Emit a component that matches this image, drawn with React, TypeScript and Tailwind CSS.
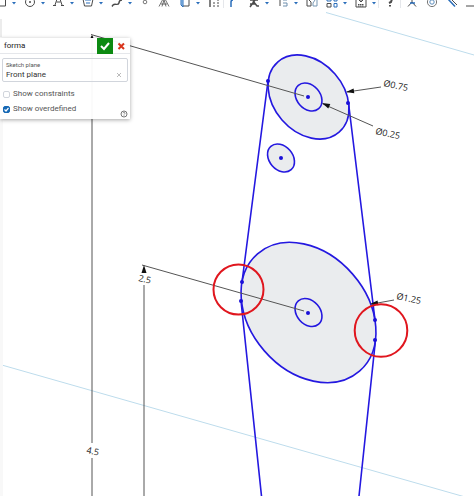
import type { ReactNode } from "react";

type Tool = {
    name: string;
    icon: ReactNode;
    menu?: boolean;
    gap?: string;
    size?: string;
    divider?: boolean;
};

const dark = "#4b4b4b";
const blue = "#2a6ebb";

const tools: Tool[] = [
    { name: "Rectangle", menu: true, size: "w-2.5", gap: "mr-[3px]", icon: <path d="M-3 6H5.500V-2" stroke={dark} /> },
    { name: "Circle", menu: true, gap: "mr-[3px]", icon: <><circle cx="9" cy="2" r="4.500" stroke={dark} /><circle cx="9" cy="2" r="1" fill={dark} /></> },
    { name: "Arc", menu: true, gap: "mr-[3px]", icon: <><path d="M7-1L5 5M10-1L12 5M6.500 2H10.500" stroke={dark} /><path d="M3 5.500H6M11 5.500H14" stroke={dark} /></> },
    { name: "Polygon", menu: true, gap: "mr-[3px]", icon: <><path d="M4-1L5.500 6H12.500L14-1" stroke={dark} /><path d="M6 0H12M7 3H11" stroke={blue} /></> },
    { name: "Spline", menu: true, gap: "mr-[3px]", icon: <path d="M4 6.500L5 5C7 3 10 6 11 3C11 1 12 0 14 0" stroke={dark} strokeWidth="1.400" /> },
    { name: "Point", icon: <circle cx="8" cy="2" r="1.800" stroke="#777" /> },
    { name: "Text", gap: "mr-[3px]", icon: <><path d="M8-1L4 6.500M10-1L14 6.500M9 0L7 6.500M9 0L11 6.500M6 4H12" stroke={dark} strokeWidth=".8" /></> },
    { name: "Use", menu: true, gap: "mr-[3px]", icon: <><path d="M6-1V6H13V-1" stroke={dark} /><path d="M5-1V5L7 7V-1" stroke={blue} fill="#acd0f1" /></> },
    { name: "Construction", divider: true, icon: <><path d="M5-1V7" stroke={dark} strokeWidth="1.400" /><path d="M8 3H11M8 6H10M13-1V7" stroke={dark} strokeDasharray="2 1" /></> },
    { name: "Dimension", gap: "mr-[3px]", icon: <path d="M7 7V2C7 1 8 0 9 0" stroke={blue} strokeWidth="1.500" /> },
    { name: "Trim", menu: true, gap: "mr-[3px]", icon: <path d="M5 0H13M10 0L5 7M8 1L12 6H14M5 4H10" stroke={dark} strokeWidth="1.500" /> },
    { name: "Linear pattern", menu: true, gap: "mr-[3px]", icon: <><path d="M6 0V6" stroke={dark} /><path d="M9 0H13M9 3H13V6H9" stroke="#6e8fae" /></> },
    { name: "Mirror", gap: "mr-0.5", icon: <><path d="M4-1V6H8V2L5-1" stroke={dark} /><path d="M14-1V6H10V3L12 0" stroke="#7797b3" /></> },
    { name: "Pattern", menu: true, gap: "mr-[3px]", icon: <><path d="M4-2H8V1H4ZM11-2H14V1H11Z" stroke={blue} /><path d="M4 3.500H8V7H4Z" stroke={dark} /><path d="M11 3.500H14V7H11Z" stroke={blue} /></> },
    { name: "Insert DXF", menu: true, gap: "mr-[3px]", divider: true, icon: <><path d="M4-1V7H14V-1" stroke={dark} /><path d="M6 4.500H12M6 6H12" stroke={dark} strokeDasharray="1.500 .5" /><path d="M9-1V2L7 0M9 2L11 0" stroke={dark} /></> },
    { name: "Fix", gap: "mr-0.5", divider: true, icon: <path d="M10-1L9 2L7 3M8 5V6.500" stroke={dark} strokeWidth="2" /> },
    { name: "Coincident", gap: "mr-0.5", icon: <><path d="M9-1V2L5 6.500M9 2L13 6.500" stroke={dark} /><path d="M7 3H12" stroke={blue} strokeWidth="1.500" /></> },
    { name: "Concentric", gap: "mr-0.5", icon: <><circle cx="9" cy="2" r="4.600" stroke="#777" /><circle cx="9" cy="2" r="2.200" stroke="#5c8dbd" /></> },
    { name: "Parallel", gap: "mr-0.5", icon: <><path d="M5-1L12 6.500" stroke={blue} strokeWidth="1.500" /><path d="M8-1L14 5" stroke={dark} /></> },
    { name: "Tangent", icon: <path d="M3 6H12" stroke={dark} /> },
];

function Toolbar() {
    return (
        <div role="toolbar" aria-label="Sketch tools" className="flex h-2 overflow-hidden bg-white">
            {tools.map((tool) => (
                <div key={tool.name} className={`flex shrink-0 ${tool.gap ?? ""}`}>
                    <button type="button" aria-label={tool.name} className={`h-2 ${tool.size ?? "w-[18px]"}`}>
                        <svg viewBox={tool.size ? "0 0 10 8" : "0 0 18 8"} fill="none" className="block h-2 w-full">
                            {tool.icon}
                        </svg>
                    </button>
                    {tool.menu && (
                        <button type="button" aria-label={`${tool.name} options`} className="h-2 w-2">
                            <svg viewBox="0 0 8 8" className="block h-2 w-2">
                                <path d="M2 2H6L4 4.500Z" fill={blue} />
                            </svg>
                        </button>
                    )}
                    {tool.divider && <span className="h-2 w-px bg-gray-200" />}
                </div>
            ))}
        </div>
    );
}

function SketchDialog() {
    return (
        <form className="absolute top-[30px] left-0 w-[130px] bg-white/95 font-[Roboto,sans-serif] text-[8px] leading-3 text-[#555] shadow-[0_1px_4px_rgba(0,0,0,0.35)]">
            <div className="flex h-4 items-center border-b border-gray-200 pr-px pl-1">
                <h2 className="flex-1 text-[#222]">forma</h2>
                <button type="button" aria-label="Accept" className="flex size-4 items-center justify-center bg-[#0c8a12]">
                    <svg viewBox="0 0 16 16" className="size-4" fill="none" stroke="#fff" strokeWidth="2">
                        <path d="M4 8L7 11L12 5" />
                    </svg>
                </button>
                <button type="button" aria-label="Cancel" className="flex size-4 items-center justify-center">
                    <svg viewBox="0 0 16 16" className="size-4" fill="none" stroke="#d9341c" strokeWidth="2">
                        <path d="M5.500 5.500L11 11M11 5.500L5.500 11" />
                    </svg>
                </button>
            </div>
            <div className="mx-0.5 mt-1 flex h-6 items-end rounded-xs border border-gray-300 pr-1 pl-[3px]">
                <label className="min-w-0 flex-1">
                    <span className="block text-[6px] leading-2">Sketch plane</span>
                    <input type="text" defaultValue="Front plane" className="block h-3 w-full text-[8px] leading-3 text-[#333] outline-none" />
                </label>
                <button type="button" aria-label="Clear plane" className="mb-0.5 size-2">
                    <svg viewBox="0 0 8 8" className="size-2" stroke="#aaa" strokeWidth=".8">
                        <path d="M2 2L6 6M6 2L2 6" />
                    </svg>
                </button>
            </div>
            <div className="flex items-end pt-1.5 pr-0.5 pl-[3px]">
                <div className="flex flex-1 flex-col gap-[3px] pb-1">
                    <label className="flex items-center gap-[3px]">
                        <input type="checkbox" className="size-[7px] appearance-none rounded-xs border border-gray-300 bg-white" />
                        Show constraints
                    </label>
                    <label className="flex items-center gap-[3px]">
                        <span className="relative flex">
                            <input type="checkbox" defaultChecked className="peer size-[7px] appearance-none rounded-xs border border-gray-300 bg-white checked:border-[#1769b5] checked:bg-[#1769b5]" />
                            <svg viewBox="0 0 7 7" className="pointer-events-none absolute inset-0 hidden size-[7px] peer-checked:block" fill="none" stroke="#fff" strokeWidth="1.200">
                                <path d="M1.500 3.500L3 5L5.500 2" />
                            </svg>
                        </span>
                        Show overdefined
                    </label>
                </div>
                <button type="button" aria-label="Help" className="mb-px size-2">
                    <svg viewBox="0 0 8 8" className="block size-2" fill="none" stroke="#777">
                        <circle cx="4" cy="4" r="3" />
                        <path d="M3 3.200C3 2 5 2 5 3.200C5 4 4 4 4 4.600M4 5.300V6" strokeWidth=".8" />
                    </svg>
                </button>
            </div>
        </form>
    );
}

const points = [
    [308, 97], [268, 81], [348, 103], [281, 158], [308, 313],
    [242, 282], [241, 301], [375, 320], [375, 340],
];

// Arrow head pointing left, with its tip at the origin
function Arrow({ x, y, angle }: { x: number; y: number; angle: number }) {
    return <path d="M0 0L8-2.500V2.500Z" fill="#111" transform={`translate(${x} ${y}) rotate(${angle})`} />;
}

function Sketch() {
    return (
        <svg viewBox="0 8 474 488" className="block h-auto w-full" role="img" aria-label="Front plane sketch">
            {/* plane outline */}
            <path d="M0 364.500L474 499.500M326 12.500L474 55" stroke="#bddcec" />

            {/* edge of the feature list */}
            <path d="M0 19H2V37H0Z" fill="#ececec" />
            <path d="M0 120H3V496H0Z" fill="#f8f8f8" />

            {/* profiles */}
            <g fill="#eaecee" stroke="#2418e0" strokeWidth="1.600">
                <ellipse cx="308.500" cy="97" rx="46.600" ry="35.100" transform="rotate(49 308.500 97)" />
                <ellipse cx="308.500" cy="97" rx="15.500" ry="11.700" transform="rotate(49 308.500 97)" />
                <ellipse cx="281" cy="158" rx="15.500" ry="11.700" transform="rotate(49 281 158)" />
                <ellipse cx="308.500" cy="312.500" rx="77.700" ry="58.500" transform="rotate(49 308.500 312.500)" />
                <ellipse cx="308.500" cy="312.500" rx="15.500" ry="11.700" transform="rotate(49 308.500 312.500)" />
                <path d="M268 81L242 282M348.500 103L375 320M241 301L261.500 496M375.500 340L359 496" fill="none" />
            </g>

            {/* dimension lines */}
            <g stroke="#555" fill="none">
                <path d="M91 34.500L304 96M92 36V443M92 458V496" />
                <path d="M142 265L304 311M144 268V273M144 285V496" />
                <path d="M347 92L381 87M323 104L373 126M372 304L394 300" />
            </g>
            <Arrow x={346} y={92} angle={-8} />
            <Arrow x={322} y={103} angle={24} />
            <Arrow x={370} y={304} angle={-8} />
            <Arrow x={144} y={265} angle={90} />
            <path d="M90.500 38L92 35L93.500 38Z" fill="#111" />

            <g fill="#1a10d8">
                {points.map(([x, y]) => (
                    <circle key={`${x}-${y}`} cx={x} cy={y} r="2" />
                ))}
            </g>

            <g fill="#222" className="font-['Open_Sans',sans-serif] text-[9px]">
                <text transform="translate(383 86) rotate(12)">Ø0.75</text>
                <text transform="translate(375 134) rotate(12)">Ø0.25</text>
                <text transform="translate(396 299) rotate(12)">Ø1.25</text>
                <text transform="translate(138 281) rotate(12)">2.5</text>
                <text transform="translate(86 453) rotate(12)">4.5</text>
            </g>

            {/* overdefined tangencies */}
            <g fill="none" stroke="#e0161e" strokeWidth="2">
                <circle cx="238.500" cy="289.500" r="25" />
                <circle cx="381" cy="330.500" r="26.300" />
            </g>
        </svg>
    );
}

export default function App() {
    return (
        <div className="overflow-hidden bg-white font-['Open_Sans',sans-serif]">
            <Toolbar />
            <main className="relative">
                <Sketch />
                <SketchDialog />
            </main>
        </div>
    );
}
